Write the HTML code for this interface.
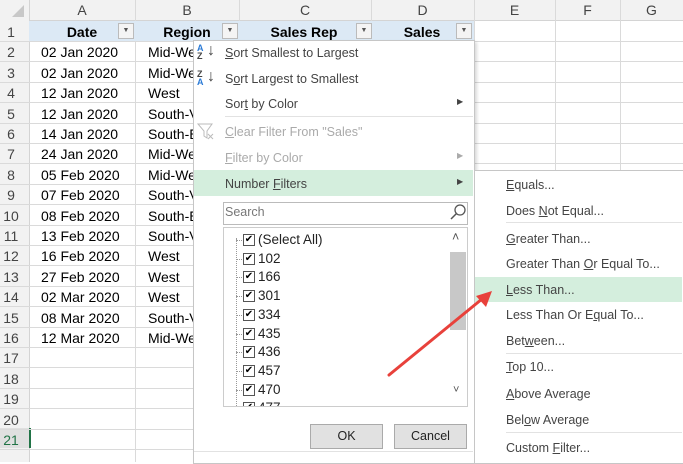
<html><head><style>
body{margin:0;width:683px;height:462px;overflow:hidden;background:#fff;font-family:"Liberation Sans",sans-serif;position:relative}
.a{position:absolute}
.t{font-size:13px;color:#000;white-space:nowrap}
.m{font-size:12.5px;color:#444;white-space:nowrap}
.g{color:#aaa}
</style></head><body>
<div class="a" style="left:0;top:0;width:683px;height:20px;background:#f2f2f2;border-bottom:1px solid #d4d4d4"></div>
<div class="a" style="left:0;top:0;width:29px;height:462px;background:#f2f2f2;border-right:1px solid #d4d4d4"></div>
<div class="a" style="left:0;top:428px;width:29px;height:20px;background:#e0e0e0;border-right:2px solid #217346"></div>
<svg class="a" style="left:10px;top:4px" width="16" height="14"><polygon points="14,1 14,13 2,13" fill="#c8c8c8"/></svg>
<div id="grid"></div>
<script>
var cols=[[29,135,'A'],[135,239,'B'],[239,371,'C'],[371,474,'D'],[474,555,'E'],[555,620,'F'],[620,683,'G']];
var h='';
cols.forEach(function(c){h+='<div class="a t" style="left:'+c[0]+'px;top:2px;width:'+(c[1]-c[0])+'px;text-align:center;color:#444;font-size:14px">'+c[2]+'</div><div class="a" style="left:'+c[1]+'px;top:0;width:1px;height:462px;background:#dadada"></div>';});
h+='<div class="a" style="left:29px;top:21px;width:445px;height:20px;background:#dce9f5"></div>';
var d=[['02 Jan 2020','Mid-We'],['02 Jan 2020','Mid-We'],['12 Jan 2020','West'],['12 Jan 2020','South-V'],['14 Jan 2020','South-E'],['24 Jan 2020','Mid-We'],['05 Feb 2020','Mid-We'],['07 Feb 2020','South-V'],['08 Feb 2020','South-E'],['13 Feb 2020','South-V'],['16 Feb 2020','West'],['27 Feb 2020','West'],['02 Mar 2020','West'],['08 Mar 2020','South-V'],['12 Mar 2020','Mid-We']];
for(var r=1;r<=21;r++){var y=21+(r-1)*20.4;
h+='<div class="a" style="left:0;top:'+(y+20)+'px;width:683px;height:1px;background:#dadada"></div>';
h+='<div class="a t" style="left:0;top:'+(y+3)+'px;width:22px;text-align:center;color:'+(r==21?'#217346':'#444')+';font-size:14px">'+r+'</div>';
if(r>=2&&r<=16){h+='<div class="a t" style="left:41px;top:'+(y+3)+'px;font-size:14px">'+d[r-2][0]+'</div><div class="a t" style="left:148px;top:'+(y+3)+'px;font-size:14px">'+d[r-2][1]+'</div>';}}
[['Date',82,118],['Region',187,222],['Sales Rep',304,356],['Sales',422,456]].forEach(function(x){h+='<div class="a t" style="left:'+(x[1]-50)+'px;top:24px;width:100px;text-align:center;font-weight:bold;font-size:14px">'+x[0]+'</div><div class="a" style="left:'+x[2]+'px;top:23px;width:14px;height:14px;border:1px solid #bbb;background:#f4f4f4;font-size:7px;color:#555;text-align:center;line-height:14px">▼</div>';});
document.getElementById('grid').innerHTML=h;
</script>
<!-- dropdown -->
<div class="a" style="left:193px;top:40px;width:280px;height:422px;background:#fff;border:1px solid #c6c6c6;box-shadow:2px 2px 3px rgba(0,0,0,.15)"></div>
<div class="a" style="left:197px;top:44px;font:bold 9px 'Liberation Sans';color:#2a7ad6;line-height:8px">A<br><span style="color:#444">Z</span></div><div class="a" style="left:207px;top:42px;font-size:16px;color:#444">↓</div>
<div class="a" style="left:197px;top:70px;font:bold 9px 'Liberation Sans';color:#444;line-height:8px">Z<br><span style="color:#2a7ad6">A</span></div><div class="a" style="left:207px;top:68px;font-size:16px;color:#444">↓</div>
<div class="a m" style="left:225px;top:46px"><u>S</u>ort Smallest to Largest</div>
<div class="a m" style="left:225px;top:72px">S<u>o</u>rt Largest to Smallest</div>
<div class="a m" style="left:225px;top:97px">Sor<u>t</u> by Color</div><div class="a m" style="left:457px;top:97px;font-size:8px">▶</div>
<div class="a" style="left:225px;top:116px;width:248px;height:1px;background:#e2e2e2"></div>
<svg class="a" style="left:197px;top:123px" width="18" height="18"><path d="M1 1H15L10 8V15L7 13V8Z" fill="none" stroke="#bbb"/><path d="M11 11L16 16M16 11L11 16" stroke="#bbb"/></svg>
<div class="a m g" style="left:225px;top:125px"><u>C</u>lear Filter From "Sales"</div>
<div class="a m g" style="left:225px;top:151px"><u>F</u>ilter by Color</div><div class="a m g" style="left:457px;top:151px;font-size:8px">▶</div>
<div class="a" style="left:194px;top:170px;width:279px;height:26px;background:#d4eedd"></div>
<div class="a m" style="left:225px;top:177px">Number <u>F</u>ilters</div><div class="a m" style="left:457px;top:177px;font-size:8px">▶</div>
<div class="a" style="left:223px;top:202px;width:243px;height:21px;border:1px solid #bbb"></div>
<div class="a m" style="left:225px;top:205px;color:#777">Search</div>
<svg class="a" style="left:450px;top:204px" width="16" height="17"><circle cx="10" cy="6" r="5" fill="none" stroke="#555" stroke-width="1.3"/><path d="M6.5 9.5L1 15" stroke="#555" stroke-width="1.5"/></svg>
<div class="a" style="left:223px;top:227px;width:243px;height:178px;border:1px solid #ccc;overflow:hidden">
<div class="a" style="left:12px;top:10px;width:0;height:170px;border-left:1px dotted #999"></div>
<div class="a" style="left:226px;top:24px;width:16px;height:78px;background:#c8c8c8"></div>
<div class="a m" style="left:228px;top:2px;color:#555">˄</div><div class="a m" style="left:229px;top:156px;color:#555;font-size:11px">˅</div>
<div id="lst"></div></div>
<script>
var l='';['(Select All)','102','166','301','334','435','436','457','470','477'].forEach(function(v,i){var y=4+i*18.7;l+='<div class="a" style="left:12px;top:'+(y+8)+'px;width:8px;border-top:1px dotted #999"></div><div class="a" style="left:19px;top:'+(y+2)+'px;width:10px;height:10px;border:1px solid #555;font-size:10px;line-height:10px;text-align:center">✔</div><div class="a t" style="left:34px;top:'+y+'px;font-size:13.5px;color:#222">'+v+'</div>';});
document.getElementById('lst').innerHTML=l;
</script>
<div class="a m" style="left:310px;top:424px;width:71px;height:23px;border:1px solid #aaa;background:#e1e1e1;text-align:center;line-height:23px;color:#222">OK</div>
<div class="a m" style="left:394px;top:424px;width:71px;height:23px;border:1px solid #aaa;background:#e1e1e1;text-align:center;line-height:23px;color:#222">Cancel</div>
<div class="a" style="left:194px;top:451px;width:279px;height:1px;background:#e2e2e2"></div>
<!-- submenu -->
<div class="a" style="left:474px;top:170px;width:208px;height:292px;background:#fff;border:1px solid #c6c6c6"></div>
<div class="a" style="left:475px;top:277px;width:207px;height:25px;background:#d4eedd"></div>
<div class="a" style="left:506px;top:222px;width:176px;height:1px;background:#e2e2e2"></div>
<div class="a" style="left:506px;top:353px;width:176px;height:1px;background:#e2e2e2"></div>
<div class="a" style="left:506px;top:432px;width:176px;height:1px;background:#e2e2e2"></div>
<div class="a m" style="left:506px;top:178px"><u>E</u>quals...</div>
<div class="a m" style="left:506px;top:204px">Does <u>N</u>ot Equal...</div>
<div class="a m" style="left:506px;top:232px"><u>G</u>reater Than...</div>
<div class="a m" style="left:506px;top:257px">Greater Than <u>O</u>r Equal To...</div>
<div class="a m" style="left:506px;top:283px"><u>L</u>ess Than...</div>
<div class="a m" style="left:506px;top:308px">Less Than Or E<u>q</u>ual To...</div>
<div class="a m" style="left:506px;top:334px">Bet<u>w</u>een...</div>
<div class="a m" style="left:506px;top:360px"><u>T</u>op 10...</div>
<div class="a m" style="left:506px;top:387px"><u>A</u>bove Average</div>
<div class="a m" style="left:506px;top:413px">Bel<u>o</u>w Average</div>
<div class="a m" style="left:506px;top:441px">Custom <u>F</u>ilter...</div>
<svg class="a" style="left:0;top:0" width="683" height="462"><path d="M389 375L482 299" stroke="#e8413b" stroke-width="3" stroke-linecap="round"/><polygon points="492,291 476,296 486,307" fill="#e8413b"/></svg>
</body></html>
